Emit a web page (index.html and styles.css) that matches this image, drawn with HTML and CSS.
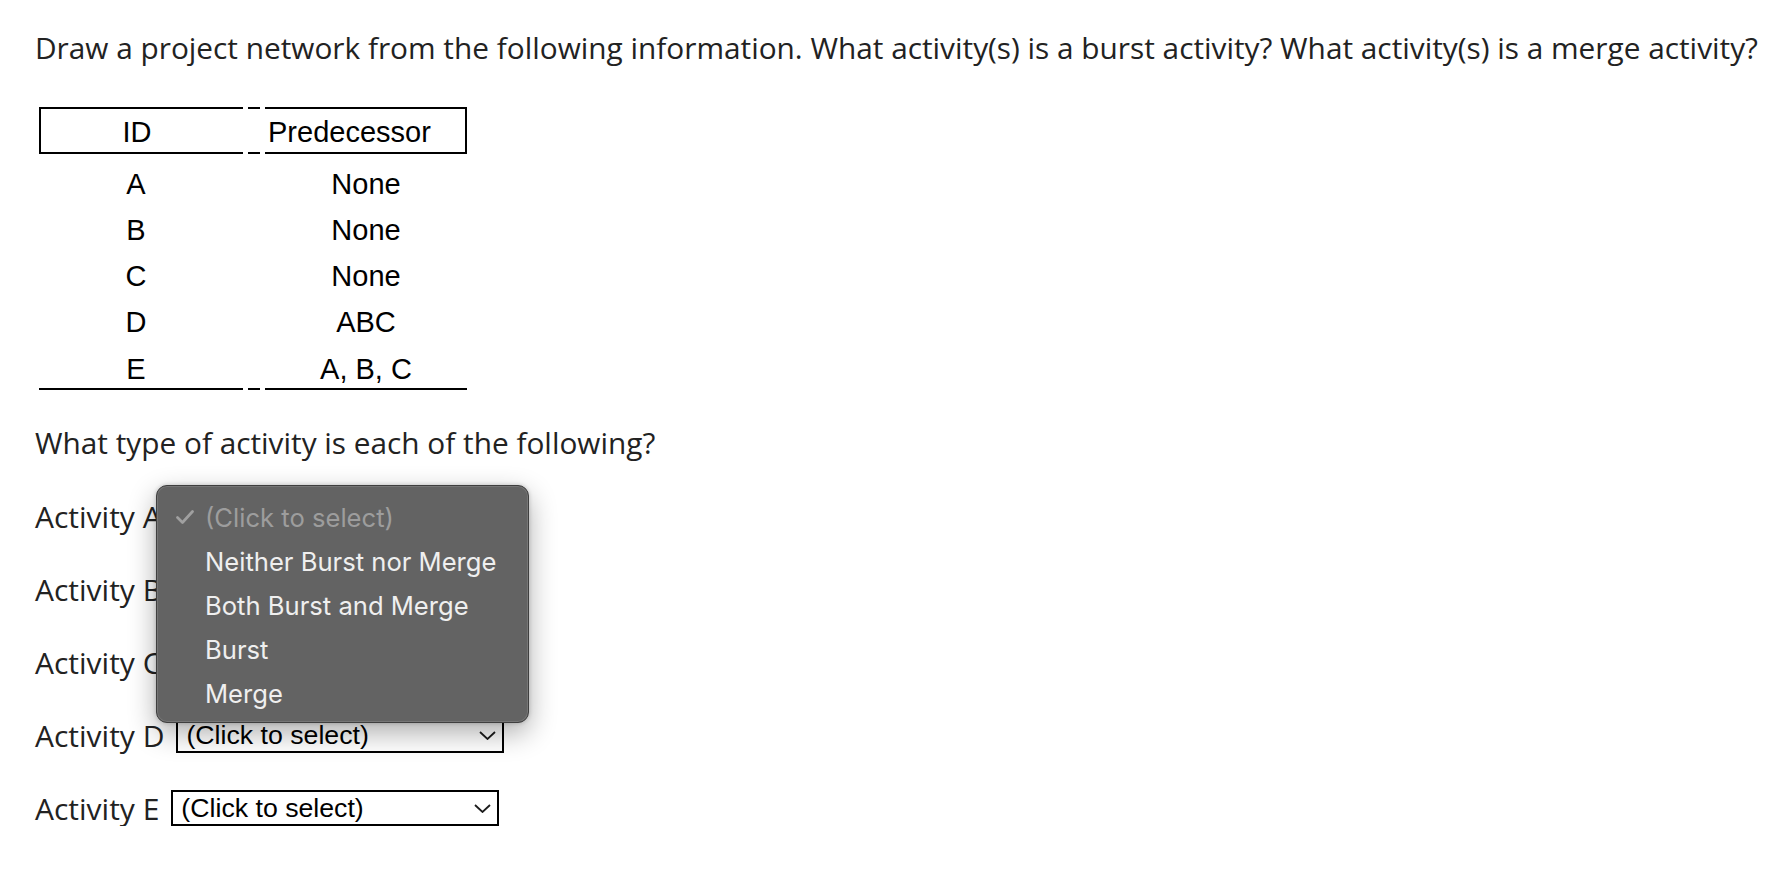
FILE: index.html
```html
<!DOCTYPE html>
<html lang="en">
<head>
<meta charset="utf-8">
<title>Project network</title>
<link rel="stylesheet" href="styles.css">
</head>
<body>
<div class="page">
  <p class="prose">Draw a project network from the following information. What activity(s) is a burst activity? What activity(s) is a merge activity?</p>

  <table class="pred">
    <thead>
      <tr><th class="c-id">ID</th><th class="c-sp"></th><th class="c-pr">Predecessor</th></tr>
    </thead>
    <tbody>
      <tr class="first"><td class="c-id">A</td><td class="c-sp"></td><td>None</td></tr>
      <tr><td class="c-id">B</td><td class="c-sp"></td><td>None</td></tr>
      <tr><td class="c-id">C</td><td class="c-sp"></td><td>None</td></tr>
      <tr><td class="c-id">D</td><td class="c-sp"></td><td>ABC</td></tr>
      <tr class="last"><td class="c-id">E</td><td class="c-sp"></td><td>A, B, C</td></tr>
    </tbody>
  </table>

  <p class="prose q2">What type of activity is each of the following?</p>

  <div class="acts">
    <div class="act"><span class="lbl">Activity A</span><div class="sel"><span>(Click to select)</span><svg class="chev" width="17" height="9" viewBox="0 0 17 9"><path d="M1 1 L8.5 8 L16 1"/></svg></div></div>
    <div class="act"><span class="lbl">Activity B</span><div class="sel"><span>(Click to select)</span><svg class="chev" width="17" height="9" viewBox="0 0 17 9"><path d="M1 1 L8.5 8 L16 1"/></svg></div></div>
    <div class="act"><span class="lbl">Activity C</span><div class="sel"><span>(Click to select)</span><svg class="chev" width="17" height="9" viewBox="0 0 17 9"><path d="M1 1 L8.5 8 L16 1"/></svg></div></div>
    <div class="act"><span class="lbl">Activity D</span><div class="sel"><span>(Click to select)</span><svg class="chev" width="17" height="9" viewBox="0 0 17 9"><path d="M1 1 L8.5 8 L16 1"/></svg></div></div>
    <div class="act"><span class="lbl">Activity E</span><div class="sel"><span>(Click to select)</span><svg class="chev" width="17" height="9" viewBox="0 0 17 9"><path d="M1 1 L8.5 8 L16 1"/></svg></div></div>
  </div>

  <div class="menu">
    <div class="item disabled"><svg class="check" width="18" height="14" viewBox="0 0 18 14"><path d="M1.5 7.5 L6.5 12.5 L16.5 1.5"/></svg><span>(Click to select)</span></div>
    <div class="item"><span class="nocheck"></span><span>Neither Burst nor Merge</span></div>
    <div class="item"><span class="nocheck"></span><span>Both Burst and Merge</span></div>
    <div class="item"><span class="nocheck"></span><span>Burst</span></div>
    <div class="item"><span class="nocheck"></span><span>Merge</span></div>
  </div>
</div>
</body>
</html>
```
FILE: styles.css
```css
html, body {
  margin: 0;
  padding: 0;
  background: #ffffff;
}

.page {
  position: relative;
  padding: 31px 0 0 35px;
}

.prose {
  margin: 0;
  font-family: "Open Sans", "Lato", sans-serif;
  font-size: 29.8px;
  line-height: 34px;
  color: #222222;
  white-space: nowrap;
}

.pred {
  margin: 42px 0 0 -1px;
  border-collapse: separate;
  border-spacing: 5px 0;
  font-family: "Liberation Sans", Arial, sans-serif;
  font-size: 29px;
  color: #000000;
}

.pred th,
.pred td {
  padding: 0;
  text-align: center;
  font-weight: normal;
  box-sizing: border-box;
}

.pred th {
  padding-top: 4px;
  line-height: 39px;
  border-top: 2px solid #000;
  border-bottom: 2px solid #000;
}

.pred th.c-id {
  width: 204px;
  border-left: 2px solid #000;
}

.pred .c-id {
  padding-right: 10px;
}

.pred th.c-sp,
.pred td.c-sp {
  width: 12px;
}

.pred th.c-pr {
  width: 202px;
  padding-left: 3px;
  text-align: left;
  border-right: 2px solid #000;
}

.pred td {
  line-height: 46px;
}

.pred tr.first td {
  padding-top: 7px;
}

.pred tr.last td {
  padding-top: 5px;
  line-height: 38px;
  border-bottom: 2px solid #000;
}

.q2 {
  margin-top: 36px;
}

.act {
  display: flex;
  align-items: center;
  height: 36px;
  margin-top: 37px;
}

.act:first-child {
  margin-top: 38px;
}

.lbl {
  font-family: "Open Sans", "Lato", sans-serif;
  font-size: 30px;
  color: #222222;
  white-space: nowrap;
}

.sel {
  display: flex;
  align-items: center;
  justify-content: space-between;
  box-sizing: border-box;
  width: 328px;
  height: 36px;
  margin-left: 12px;
  padding: 0 6px 0 8px;
  border: 2px solid #000;
  background: #fff;
  font-family: "Liberation Sans", Arial, sans-serif;
  font-size: 26.7px;
  color: #000;
}

.chev path {
  fill: none;
  stroke: #1c1c1c;
  stroke-width: 1.8;
}

.menu {
  position: absolute;
  left: 156px;
  top: 485px;
  width: 373px;
  height: 238px;
  box-sizing: border-box;
  padding-top: 9px;
  background: #636363;
  border: 1px solid #3f3f3f;
  border-radius: 11px;
  box-shadow: inset 0 0 0 1px rgba(255, 255, 255, 0.12), 0 10px 28px rgba(0, 0, 0, 0.32), 0 0 4px rgba(0, 0, 0, 0.2);
  font-family: "Inter", "Roboto", sans-serif;
  font-size: 25.6px;
  color: #efefef;
}

.item {
  display: flex;
  align-items: center;
  height: 44px;
  padding-left: 19px;
  white-space: nowrap;
}

.item .check {
  flex: none;
  width: 18px;
  height: 14px;
  margin-right: 11px;
}

.item .check path {
  fill: none;
  stroke: #a0a0a0;
  stroke-width: 2.7;
  stroke-linecap: round;
  stroke-linejoin: round;
}

.item .nocheck {
  flex: none;
  width: 29px;
}

.item.disabled {
  color: #9d9d9d;
}
```
